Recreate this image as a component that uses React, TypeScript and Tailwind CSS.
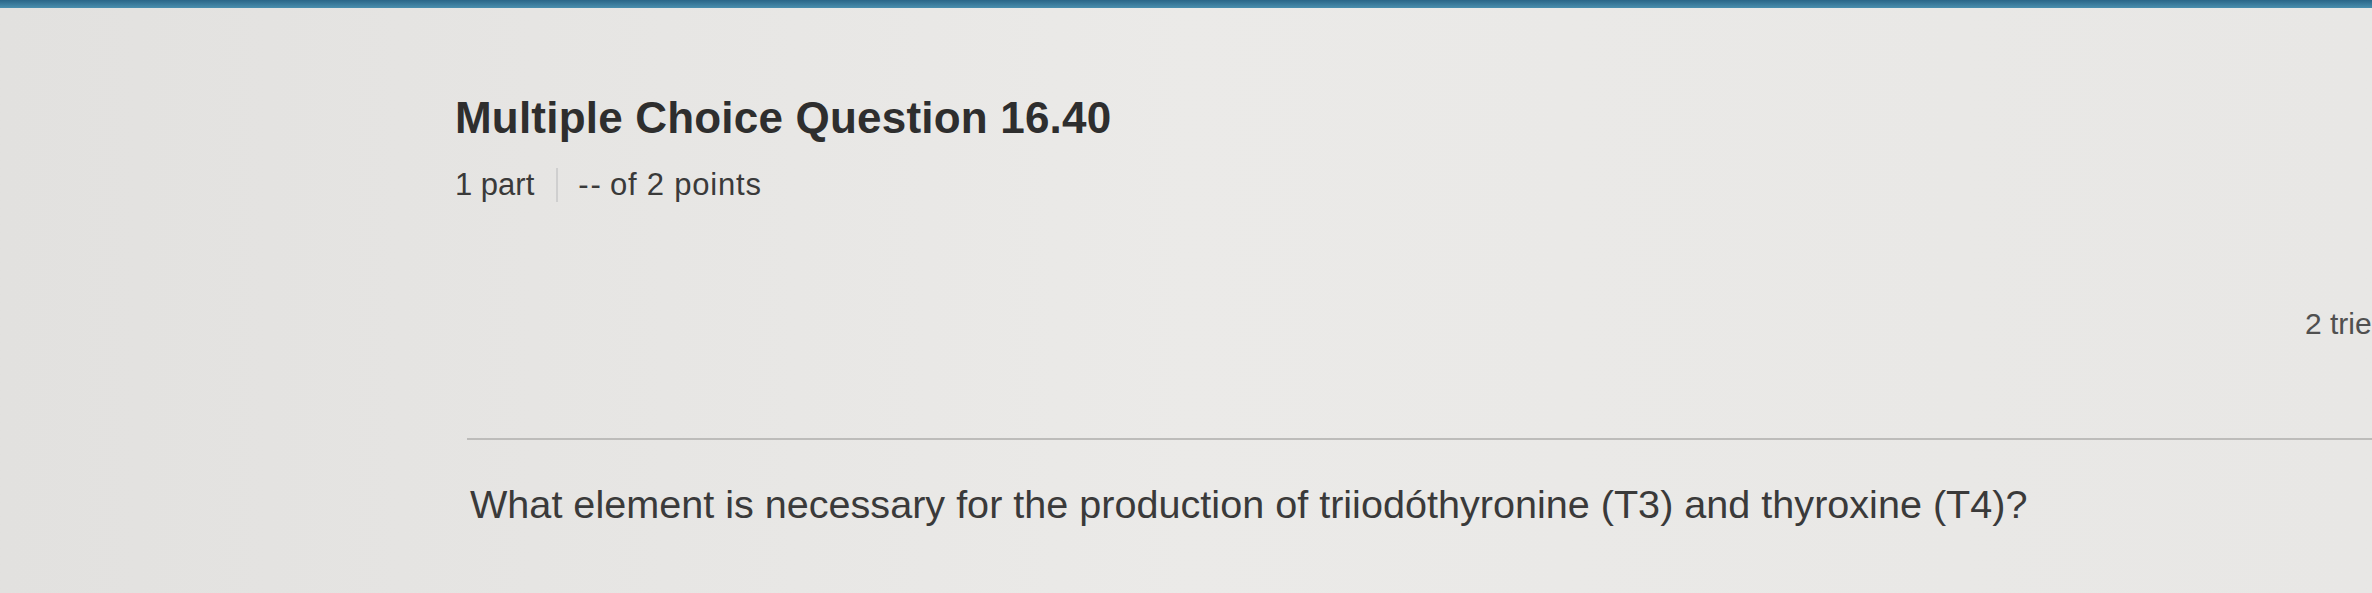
import React from "react";

export default function App() {
  return (
    <div
      className="w-[2372px] h-[593px] overflow-hidden flex flex-col bg-linear-to-r from-[#e2e1df] via-[#ebeae8] to-[#e8e7e5]"
      style={{ fontFamily: '"Liberation Sans", Arial, sans-serif' }}
    >
      <div className="h-[8px] w-full shrink-0 bg-linear-to-b from-[#2a6688] to-[#4a8fae]" />
      <div className="flex flex-col">
        <div className="pl-[455px] pt-[84px] flex flex-col">
          <h1 className="text-[44px] leading-[52px] font-bold text-[#2e2e2e] whitespace-nowrap tracking-[0.2px]">
            Multiple Choice Question 16.40
          </h1>
          <div className="mt-[23px] flex items-center text-[31px] leading-[36px] text-[#3a3a3a] whitespace-nowrap">
            <span>1 part</span>
            <span className="ml-[22px] mr-[20px] w-[2px] h-[34px] bg-[#cfcfcf]" />
            <span className="tracking-[2px] mr-[7px]">--</span>
            <span className="tracking-[0.8px]">of 2 points</span>
          </div>
        </div>
        <div className="mt-[103px] flex justify-end">
          <span className="w-[67px] shrink-0 whitespace-nowrap text-[30px] leading-[36px] text-[#505050]">
            2 tries remaining
          </span>
        </div>
        <div className="pl-[467px] mt-[96px]">
          <div className="h-[2px] w-full bg-[#bdbcba]" />
        </div>
        <div className="pl-[470px] mt-[40px]">
          <p className="text-[39.6px] leading-[48px] text-[#3a3a3a] whitespace-nowrap">
            What element is necessary for the production of triiodóthyronine (T3) and thyroxine (T4)?
          </p>
        </div>
      </div>
    </div>
  );
}
